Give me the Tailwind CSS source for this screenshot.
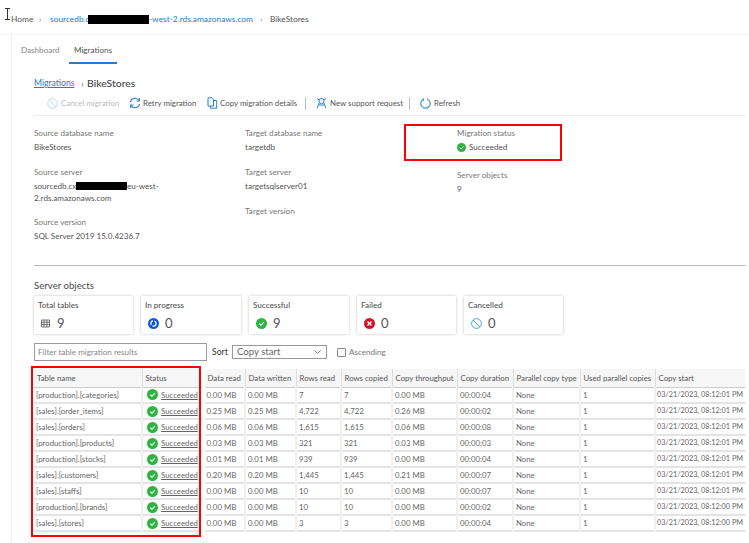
<!DOCTYPE html>
<html lang="en">
<head>
  <meta charset="UTF-8" />
  <title>BikeStores migration</title>
  <script src="https://cdn.jsdelivr.net/npm/@tailwindcss/browser@4"></script>
</head>
<body class="bg-white text-[#555] text-[8.1px] leading-[12px] font-['Lato',sans-serif] overflow-hidden">
  <div class="relative w-[749px] h-[543px] overflow-hidden">
    <!-- text cursor from the capture -->
    <svg class="absolute left-[3px] top-[8px]" width="10" height="12" viewBox="0 0 10 12" fill="none" stroke="#333" stroke-width="1"><path d="M2 .5h5M2 11.5h5M4.5 .5v11"/></svg>

    <!-- breadcrumb -->
    <div class="flex items-center h-[35px] pl-[11px] pt-[4px] text-[8.4px] border-b border-[#f3f3f3] whitespace-nowrap">
      <span class="w-[28px]">Home</span>
      <span class="w-[11px] text-[#777]">›</span>
      <span class="w-[38px] text-[#2b79c9]">sourcedb.c</span><span class="inline-block w-[61px] h-[9px] bg-black"></span><span class="w-[104px] text-[#2b79c9]">-west-2.rds.amazonaws.com</span>
      <span class="w-[17px] pl-[7px] text-[#777]">›</span>
      <span>BikeStores</span>
    </div>

    <div class="ml-[11px] border-l border-[#eee] h-[508px] pl-[22px] pr-[4px]">
      <!-- tabs -->
      <div class="flex h-[29px] -ml-[13px]">
        <div class="w-[48px] pt-[9px] text-[#888]">Dashboard</div>
        <div class="w-[48px] pt-[9px] text-center text-[#555] border-b-2 border-[#2b79c9] h-[29px]">Migrations</div>
      </div>

      <div class="flex items-center h-[27px] pt-[11px] text-[10.4px] whitespace-nowrap">
        <span class="w-[47px] text-[8.6px] text-[#2b79c9] underline">Migrations</span>
        <span class="w-[6px] text-[#777]">›</span>
        <span class="font-medium text-[#444]">BikeStores</span>
      </div>

      <!-- toolbar -->
      <div class="flex items-center h-[25px] pl-[13px] border-b border-[#eee] w-[712px] text-[7.9px] whitespace-nowrap">
        <svg class="mr-[3px]" width="11" height="11" viewBox="0 0 11 11" fill="none" stroke="#bcd8ee"><circle cx="5.5" cy="5.5" r="4.8"/><path d="M2.2 2.2l6.6 6.6"/></svg>
        <span class="text-[#bbb] w-[68px]">Cancel migration</span>
        <svg class="mr-[2px]" width="12" height="12" viewBox="0 0 12 12" fill="none" stroke="#2a7fd0" stroke-width="1.1"><path d="M1.5 5A4.6 4.6 0 0 1 10 3.5M10.5 7A4.6 4.6 0 0 1 2 8.5"/><path d="M10.4 1v3h-3M1.6 11V8h3"/></svg>
        <span class="w-[64px]">Retry migration</span>
        <svg class="mr-[2px]" width="11" height="12" viewBox="0 0 11 12" fill="none" stroke="#2a7fd0"><path d="M1 .8h4l1.5 1.6V9H1z"/><path d="M6.5 3.5h3.2V11.2H3.5V9"/></svg>
        <span class="w-[85px]">Copy migration details</span>
        <span class="w-px h-[13px] bg-[#bbb] mr-[10px]"></span>
        <svg class="mr-[3px]" width="11" height="12" viewBox="0 0 11 12" fill="none" stroke="#2a7fd0"><circle cx="5.5" cy="4" r="2.6"/><path d="M1 1.5L3 3M10 1.5L8 3M3 6L1.2 11M8 6l1.8 5M3 8h5"/></svg>
        <span class="w-[79px]">New support request</span>
        <span class="w-px h-[13px] bg-[#bbb] mr-[10px]"></span>
        <svg class="mr-[3px]" width="11" height="11" viewBox="0 0 11 11" fill="none" stroke="#3a8fdc" stroke-width="1.1"><path d="M3.5 1.2A4.7 4.7 0 1 0 7 1"/><path d="M3.4 .4v2.3"/></svg>
        <span>Refresh</span>
      </div>

      <!-- properties -->
      <div class="grid grid-cols-[211px_212px_1fr] pt-[11px] h-[150px] w-[712px] border-b border-[#bbb]">
        <div class="flex flex-col">
          <div class="text-[#777]">Source database name</div>
          <div class="mt-[2px]">BikeStores</div>
          <div class="mt-[13px] text-[#777]">Source server</div>
          <div class="mt-[2px] flex items-center">
            <span class="w-[42px]">sourcedb.cx</span><span class="w-[51px] h-[8px] bg-black"></span><span>eu-west-</span>
          </div>
          <div>2.rds.amazonaws.com</div>
          <div class="mt-[12px] text-[#777]">Source version</div>
          <div class="mt-[2px]">SQL Server 2019 15.0.4236.7</div>
        </div>
        <div class="flex flex-col">
          <div class="text-[#777]">Target database name</div>
          <div class="mt-[2px]">targetdb</div>
          <div class="mt-[13px] text-[#777]">Target server</div>
          <div class="mt-[2px]">targetsqlserver01</div>
          <div class="mt-[13px] text-[#777]">Target version</div>
        </div>
        <div class="flex flex-col">
          <div class="text-[#777]">Migration status</div>
          <div class="mt-[2px] flex items-center gap-[3px]">
            <svg width="9" height="9" viewBox="0 0 10 10"><circle cx="5" cy="5" r="5" fill="#2fb344"/><path d="M3 5.2l1.5 1.4L7.2 3.8" fill="none" stroke="#fff"/></svg>
            Succeeded
          </div>
          <div class="mt-[16px] text-[#777]">Server objects</div>
          <div class="mt-[2px]">9</div>
        </div>
      </div>

      <div class="mt-[14px] text-[9.6px] font-medium text-[#555]">Server objects</div>

      <!-- status cards -->
      <div class="flex gap-[8px] mt-[4px]">
        <div class="w-[99px] h-[38px] bg-white rounded-[1px] shadow-[0_0_3px_rgba(0,0,0,.25)] pl-[4px] pt-[3px]">
          <div class="font-medium">Total tables</div>
          <div class="flex items-center gap-[7px] pl-[3px] mt-[4px] text-[13px] leading-[16px]">
            <svg width="9" height="9" viewBox="0 0 9 9" fill="none" stroke="#555" stroke-width=".8"><path d="M.5 1h8v7h-8zM.5 3.3h8M.5 5.6h8M3.1 1v7M5.9 1v7"/></svg>9
          </div>
        </div>
        <div class="w-[100px] h-[38px] bg-white rounded-[1px] shadow-[0_0_3px_rgba(0,0,0,.25)] pl-[4px] pt-[3px]">
          <div class="font-medium">In progress</div>
          <div class="flex items-center gap-[6px] pl-[3px] mt-[4px] text-[13px] leading-[16px]">
            <svg width="11" height="11" viewBox="0 0 11 11"><circle cx="5.5" cy="5.5" r="5.5" fill="#1058d8"/><circle cx="5.5" cy="5.5" r="2.6" fill="none" stroke="#fff" stroke-width="1.2" stroke-dasharray="5 1.5"/></svg>0
          </div>
        </div>
        <div class="w-[100px] h-[38px] bg-white rounded-[1px] shadow-[0_0_3px_rgba(0,0,0,.25)] pl-[4px] pt-[3px]">
          <div class="font-medium">Successful</div>
          <div class="flex items-center gap-[6px] pl-[3px] mt-[4px] text-[13px] leading-[16px]">
            <svg width="11" height="11" viewBox="0 0 10 10"><circle cx="5" cy="5" r="5" fill="#2fb344"/><path d="M3 5.2l1.5 1.4L7.2 3.8" fill="none" stroke="#fff"/></svg>9
          </div>
        </div>
        <div class="w-[99px] h-[38px] bg-white rounded-[1px] shadow-[0_0_3px_rgba(0,0,0,.25)] pl-[4px] pt-[3px]">
          <div class="font-medium">Failed</div>
          <div class="flex items-center gap-[6px] pl-[3px] mt-[4px] text-[13px] leading-[16px]">
            <svg width="11" height="11" viewBox="0 0 10 10"><circle cx="5" cy="5" r="5" fill="#d8122a"/><path d="M3.2 3.2l3.6 3.6M6.8 3.2l-3.6 3.6" fill="none" stroke="#fff" stroke-width="1.2"/></svg>0
          </div>
        </div>
        <div class="w-[99px] h-[38px] bg-white rounded-[1px] shadow-[0_0_3px_rgba(0,0,0,.25)] pl-[4px] pt-[3px]">
          <div class="font-medium">Cancelled</div>
          <div class="flex items-center gap-[6px] pl-[3px] mt-[4px] text-[13px] leading-[16px]">
            <svg width="11" height="11" viewBox="0 0 11 11" fill="none" stroke="#4aa3e8" stroke-width="1"><circle cx="5.5" cy="5.5" r="4.9"/><path d="M2 2l7 7"/></svg>0
          </div>
        </div>
      </div>

      <!-- filter and sort -->
      <div class="flex items-center h-[18px] mt-[9px]">
        <div class="w-[173px] h-[18px] border border-[#999] pl-[3px] leading-[16px] text-[#888]">Filter table migration results</div>
        <span class="ml-[5px] w-[20px] text-[8.6px] text-[#444] font-medium">Sort</span>
        <div class="w-[95px] h-[14px] border border-[#999] pl-[4px] flex items-center justify-between pr-[5px] text-[#666] text-[9.6px]">
          Copy start
          <svg width="7" height="4" viewBox="0 0 7 4" fill="none" stroke="#666" stroke-width=".8"><path d="M.5 .5l3 3 3-3"/></svg>
        </div>
        <span class="ml-[10px] w-[9px] h-[9px] border border-[#888] rounded-[1px]"></span>
        <span class="ml-[3px] text-[#777]">Ascending</span>
      </div>

      <!-- results table -->
      <table id="results" class="table-fixed border-collapse mt-[8px] w-[711px] whitespace-nowrap text-[7.8px]">
        <colgroup>
          <col class="w-[108px]" /><col class="w-[61px]" /><col class="w-[42px]" /><col class="w-[51px]" />
          <col class="w-[45px]" /><col class="w-[51px]" /><col class="w-[65px]" /><col class="w-[56px]" />
          <col class="w-[67px]" /><col class="w-[75px]" /><col class="w-[90px]" />
        </colgroup>
        <thead>
          <tr class="h-[18px] bg-[#f6f6f6] border-b border-[#ccc] text-[#555] text-left">
            <th class="font-normal pl-[3px] border-r border-[#ddd]">Table name</th>
            <th class="font-normal pl-[3px] border-r-[3px] border-white">Status</th>
            <th class="font-normal pl-[3px] border-r border-[#ddd]">Data read</th>
            <th class="font-normal pl-[3px] border-r border-[#ddd]">Data written</th>
            <th class="font-normal pl-[3px] border-r border-[#ddd]">Rows read</th>
            <th class="font-normal pl-[3px] border-r border-[#ddd]">Rows copied</th>
            <th class="font-normal pl-[3px] border-r border-[#ddd]">Copy throughput</th>
            <th class="font-normal pl-[3px] border-r border-[#ddd]">Copy duration</th>
            <th class="font-normal pl-[3px] border-r border-[#ddd]">Parallel copy type</th>
            <th class="font-normal pl-[3px] border-r border-[#ddd]">Used parallel copies</th>
            <th class="font-normal pl-[3px]">Copy start</th>
          </tr>
        </thead>
        <tbody id="rows"></tbody>
      </table>
    </div>

    <!-- red annotation boxes -->
    <div class="absolute left-[404px] top-[124px] w-[158px] h-[37px] border-2 border-[#f00]"></div>
    <div class="absolute left-[31px] top-[366px] w-[170px] h-[171px] border-2 border-[#f00]"></div>
  </div>

  <script>
    const data = [
      ["[production].[categories]", "0.00 MB", "0.00 MB", "7", "7", "0.00 MB", "00:00:04", "03/21/2023, 08:12:01 PM"],
      ["[sales].[order_items]", "0.25 MB", "0.25 MB", "4,722", "4,722", "0.26 MB", "00:00:02", "03/21/2023, 08:12:01 PM"],
      ["[sales].[orders]", "0.06 MB", "0.06 MB", "1,615", "1,615", "0.06 MB", "00:00:08", "03/21/2023, 08:12:01 PM"],
      ["[production].[products]", "0.03 MB", "0.03 MB", "321", "321", "0.03 MB", "00:00:03", "03/21/2023, 08:12:01 PM"],
      ["[production].[stocks]", "0.01 MB", "0.01 MB", "939", "939", "0.00 MB", "00:00:04", "03/21/2023, 08:12:01 PM"],
      ["[sales].[customers]", "0.20 MB", "0.20 MB", "1,445", "1,445", "0.21 MB", "00:00:07", "03/21/2023, 08:12:01 PM"],
      ["[sales].[staffs]", "0.00 MB", "0.00 MB", "10", "10", "0.00 MB", "00:00:07", "03/21/2023, 08:12:01 PM"],
      ["[production].[brands]", "0.00 MB", "0.00 MB", "10", "10", "0.00 MB", "00:00:02", "03/21/2023, 08:12:00 PM"],
      ["[sales].[stores]", "0.00 MB", "0.00 MB", "3", "3", "0.00 MB", "00:00:04", "03/21/2023, 08:12:00 PM"],
    ];

    document.getElementById("rows").innerHTML = data.map(r => `
      <tr class="h-[16px] border-b-2 border-[#e4e4e4] text-[#666]">
        <td class="pl-[2px] border-r-2 border-[#f0f0f0] overflow-hidden">${r[0]}</td>
        <td class="pl-[4px] border-r-[3px] border-white">
          <span class="flex items-center gap-[3px]">
            <svg width="11" height="11" viewBox="0 0 10 10"><circle cx="5" cy="5" r="5" fill="#2fb344"/><path d="M3 5.2l1.5 1.4L7.2 3.8" fill="none" stroke="#fff"/></svg>
            <span class="underline">Succeeded</span>
          </span>
        </td>
        <td class="pl-[2px] border-r-2 border-[#f0f0f0]">${r[1]}</td>
        <td class="pl-[2px] border-r-2 border-[#f0f0f0]">${r[2]}</td>
        <td class="pl-[2px] border-r-2 border-[#f0f0f0]">${r[3]}</td>
        <td class="pl-[2px] border-r-2 border-[#f0f0f0]">${r[4]}</td>
        <td class="pl-[2px] border-r-2 border-[#f0f0f0]">${r[5]}</td>
        <td class="pl-[2px] border-r-2 border-[#f0f0f0]">${r[6]}</td>
        <td class="pl-[2px] border-r-2 border-[#f0f0f0]">None</td>
        <td class="pl-[2px] border-r-2 border-[#f0f0f0]">1</td>
        <td class="pl-[1px] text-[7.3px]">${r[7]}</td>
      </tr>
    `).join("");
  </script>
</body>
</html>
